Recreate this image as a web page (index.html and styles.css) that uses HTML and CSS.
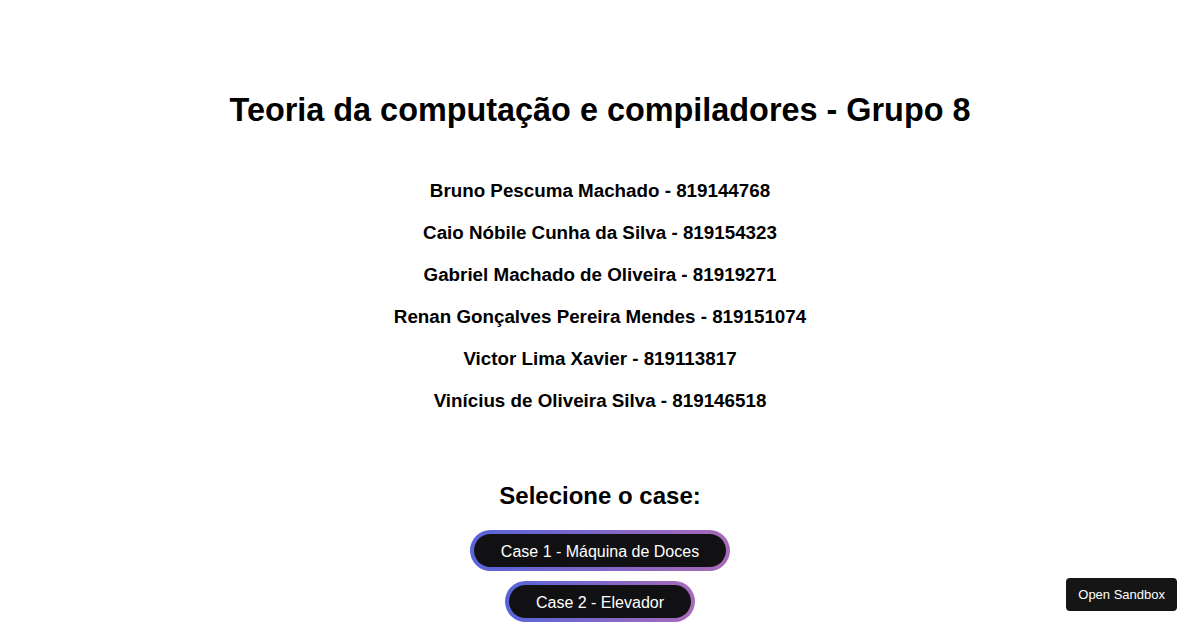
FILE: index.html
```html
<!DOCTYPE html>
<html lang="pt-BR">
<head>
    <meta charset="UTF-8">
    <meta name="viewport" content="width=device-width, initial-scale=1.0">
    <title>Teoria da computação e compiladores - Grupo 8</title>
    <link rel="stylesheet" href="styles.css">
</head>
<body>
    <div class="app">
        <h1>Teoria da computação e compiladores - Grupo 8</h1>

        <div class="members">
            <h3>Bruno Pescuma Machado - 819144768</h3>
            <h3>Caio Nóbile Cunha da Silva - 819154323</h3>
            <h3>Gabriel Machado de Oliveira - 81919271</h3>
            <h3>Renan Gonçalves Pereira Mendes - 819151074</h3>
            <h3>Victor Lima Xavier - 819113817</h3>
            <h3>Vinícius de Oliveira Silva - 819146518</h3>
        </div>

        <h2>Selecione o case:</h2>
        <div class="cases">
            <button class="case-btn">Case 1 - Máquina de Doces</button>
            <button class="case-btn">Case 2 - Elevador</button>
        </div>
    </div>

    <button class="sandbox-btn">Open Sandbox</button>
</body>
</html>
```

FILE: styles.css
```css
body {
    margin: 0;
    font-family: "Liberation Sans", Arial, sans-serif;
    background: #ffffff;
    color: #000000;
    overflow: hidden;
}
.app {
    display: flex;
    flex-direction: column;
    align-items: center;
    padding-top: 92px;
}
h1 {
    margin: 0;
    font-size: 32.4px;
    line-height: 37px;
}
.members {
    display: flex;
    flex-direction: column;
    align-items: center;
    gap: 21px;
    margin-top: 51px;
}
h3 {
    margin: 0;
    font-size: 18.8px;
    line-height: 21px;
}
h2 {
    margin: 71px 0 0;
    font-size: 24px;
    line-height: 28px;
}
.cases {
    display: flex;
    flex-direction: column;
    align-items: center;
    gap: 10px;
    margin-top: 20px;
}
.case-btn {
    font-family: "Liberation Sans", Arial, sans-serif;
    font-size: 16px;
    color: #ffffff;
    padding: 9px 27px;
    height: 41px;
    border: 4px solid transparent;
    border-radius: 22px;
    background: linear-gradient(#111113, #111113) padding-box,
                linear-gradient(90deg, #5764d9, #a86ab8) border-box;
    cursor: pointer;
}
.sandbox-btn {
    position: fixed;
    right: 23px;
    bottom: 19px;
    font-family: "Liberation Sans", Arial, sans-serif;
    font-size: 13px;
    color: #ffffff;
    background: #151515;
    border: none;
    border-radius: 4px;
    padding: 0 12px;
    height: 33px;
    cursor: pointer;
}
```
